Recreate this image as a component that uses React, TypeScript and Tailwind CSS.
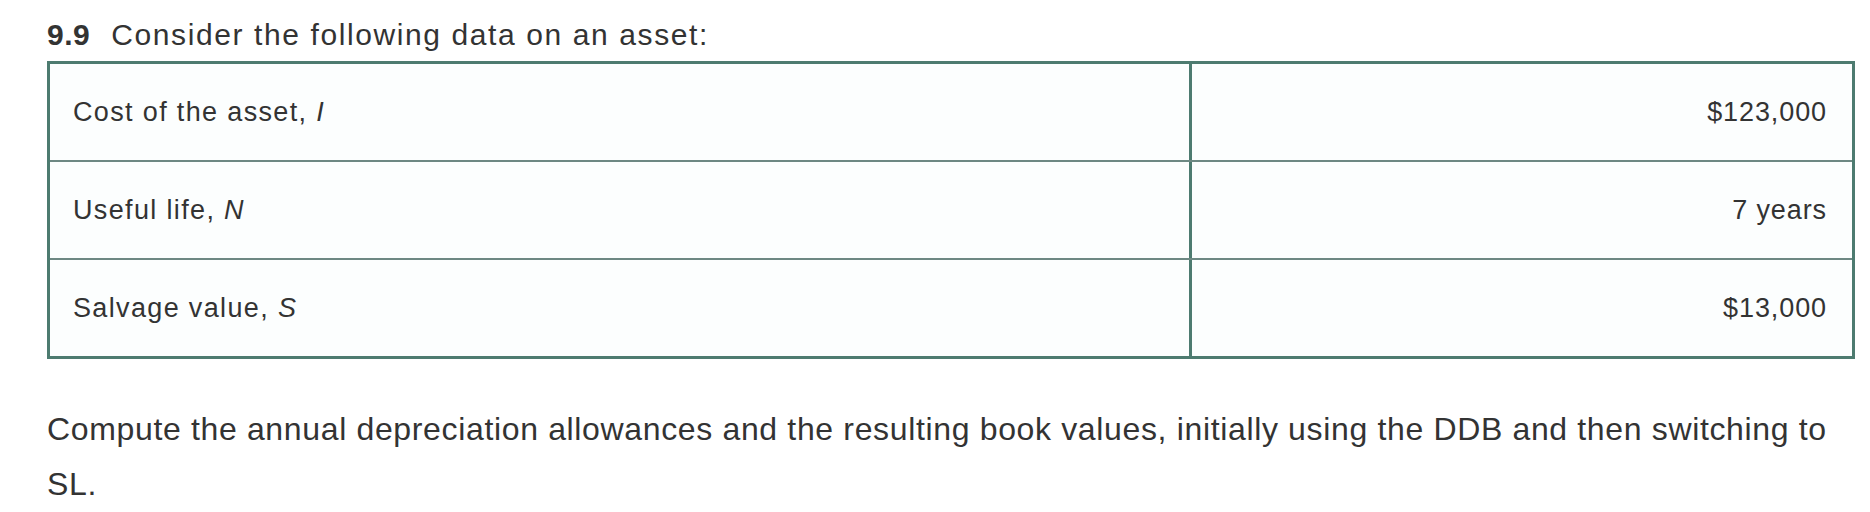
import React from "react";

const rows: { label: string; sym: string; value: string }[] = [
  { label: "Cost of the asset, ", sym: "I", value: "$123,000" },
  { label: "Useful life, ", sym: "N", value: "7 years" },
  { label: "Salvage value, ", sym: "S", value: "$13,000" },
];

export default function App() {
  return (
    <div
      className="w-[1870px] h-[512px] bg-white pl-[47px] text-[#333333]"
      style={{ fontFamily: '"Liberation Sans", Arial, sans-serif' }}
    >
      <div className="pt-[20px] text-[30px] leading-[30px] tracking-[1.6px] mb-[11px] flex">
        <span className="font-bold mr-[21px] tracking-[0.5px]">9.9</span>
        <span>Consider the following data on an asset:</span>
      </div>
      <div className="w-[1808px] border-[3px] border-[#4d7b70] bg-[#fcfefe]">
        {rows.map((r, i) => (
          <div
            key={i}
            className={
              i < rows.length - 1
                ? "flex border-b-2 border-[#6d8883]"
                : "flex"
            }
          >
            <div className="w-[1142px] h-[96px] flex items-center pl-[23px] border-r-[3px] border-[#4d7b70] text-[27px] tracking-[1.35px]">
              <span className="whitespace-pre">
                {r.label}
                <span className="italic">{r.sym}</span>
              </span>
            </div>
            <div className="flex-1 h-[96px] flex items-center justify-end pr-[25px] text-[27px] tracking-[0.9px]">
              <span>{r.value}</span>
            </div>
          </div>
        ))}
      </div>
      <p className="mt-[43px] w-[1808px] text-[32px] leading-[55px] tracking-[0.65px]">
        Compute the annual depreciation allowances and the resulting book values, initially using the DDB and then switching to SL.
      </p>
    </div>
  );
}
